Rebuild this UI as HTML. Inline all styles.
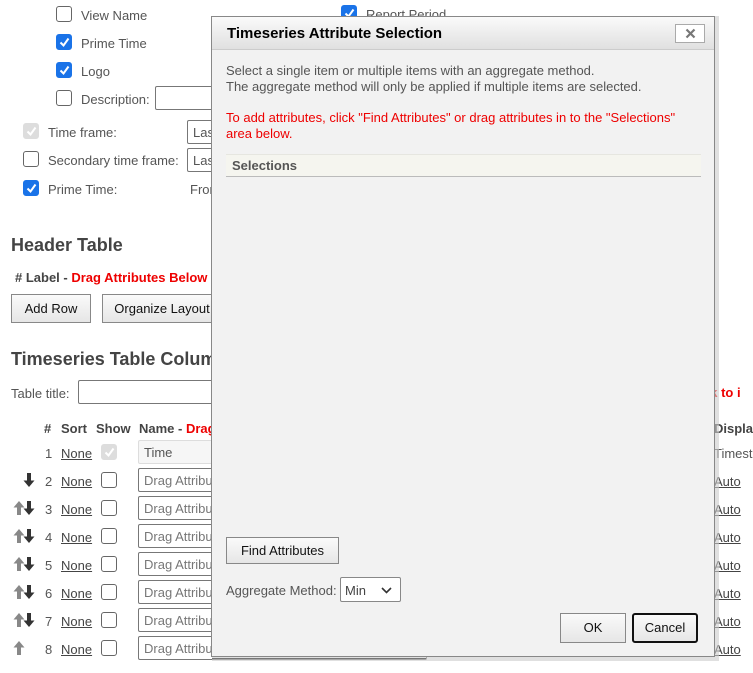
<!DOCTYPE html>
<html><head><meta charset="utf-8">
<style>
*{box-sizing:border-box;margin:0;padding:0}
body{width:753px;height:673px;overflow:hidden;background:#fff;font-family:"Liberation Sans",sans-serif;font-size:13px;color:#555;position:relative}
.a{position:absolute;white-space:nowrap}
.cb{position:absolute;width:16px;height:16px;border:1px solid #666;border-radius:3px;background:#fff}
.cb.on{background:#1a73e8;border-color:#1a73e8}
.cb.dis{background:#ddd;border-color:#ddd}
.cb svg{position:absolute;left:2px;top:2px}
.inp{position:absolute;border:1px solid #777;border-radius:2px;background:#fff;height:24px;padding:4px 5px;color:#777;white-space:nowrap;overflow:hidden}
.btn{position:absolute;border:1px solid #888;background:linear-gradient(#fafafa,#e6e6e6);color:#111;text-align:center;font-size:13px}
h2{position:absolute;font-size:18px;font-weight:bold;color:#444}
.red{color:#e00}
u{color:#444}
</style></head><body>

<div class="cb" style="left:56px;top:6px"></div><div class="a" style="left:81px;top:8px">View Name</div>
<div class="cb on" style="left:56px;top:34px"><svg width="11" height="11" viewBox="0 0 11 11"><path d="M1.5 5.5l3 3 5-7" stroke="#fff" stroke-width="2" fill="none"/></svg></div><div class="a" style="left:81px;top:36px">Prime Time</div>
<div class="cb on" style="left:56px;top:62px"><svg width="11" height="11" viewBox="0 0 11 11"><path d="M1.5 5.5l3 3 5-7" stroke="#fff" stroke-width="2" fill="none"/></svg></div><div class="a" style="left:81px;top:64px">Logo</div>
<div class="cb" style="left:56px;top:90px"></div><div class="a" style="left:81px;top:92px">Description:</div>
<div class="inp" style="left:155px;top:86px;width:70px"></div>
<div class="cb on" style="left:341px;top:5px;"><svg width="11" height="11" viewBox="0 0 11 11"><path d="M1.5 5.5l3 3 5-7" stroke="#fff" stroke-width="2" fill="none"/></svg></div><div class="a" style="left:366px;top:7px">Report Period</div>

<div class="cb dis" style="left:23px;top:123px"><svg width="11" height="11" viewBox="0 0 11 11"><path d="M1.5 5.5l3 3 5-7" stroke="#fff" stroke-width="2" fill="none"/></svg></div><div class="a" style="left:48px;top:125px">Time frame:</div>
<div class="inp" style="left:187px;top:120px;width:40px;color:#555">Last</div>
<div class="cb" style="left:23px;top:151px"></div><div class="a" style="left:48px;top:153px">Secondary time frame:</div>
<div class="inp" style="left:187px;top:148px;width:40px;color:#555">Last</div>
<div class="cb on" style="left:23px;top:180px"><svg width="11" height="11" viewBox="0 0 11 11"><path d="M1.5 5.5l3 3 5-7" stroke="#fff" stroke-width="2" fill="none"/></svg></div><div class="a" style="left:48px;top:182px">Prime Time:</div>
<div class="a" style="left:190px;top:182px">From</div>

<h2 style="left:11px;top:235px">Header Table</h2>
<div class="a" style="left:15px;top:270px;font-weight:bold;color:#444"># Label - <span class="red">Drag Attributes Below</span></div>
<div class="btn" style="left:11px;top:294px;width:80px;height:29px;line-height:27px">Add Row</div>
<div class="btn" style="left:102px;top:294px;width:120px;height:29px;line-height:27px">Organize Layout</div>

<h2 style="left:11px;top:349px">Timeseries Table Columns</h2>
<div class="a" style="left:11px;top:386px">Table title:</div>
<div class="inp" style="left:78px;top:380px;width:150px"></div>
<div class="a red" style="left:703px;top:385px;font-weight:bold">ck to i</div>

<div class="a" style="left:44px;top:421px;font-weight:bold;color:#444">#</div>
<div class="a" style="left:61px;top:421px;font-weight:bold;color:#444">Sort</div>
<div class="a" style="left:96px;top:421px;font-weight:bold;color:#444">Show</div>
<div class="a" style="left:139px;top:421px;font-weight:bold;color:#444">Name - <span class="red">Drag</span></div>
<div class="a" style="left:714px;top:421px;font-weight:bold;color:#444">Display</div>

<div class="a" style="left:45px;top:446px">1</div><div class="a" style="left:61px;top:446px"><u>None</u></div>
<div class="cb dis" style="left:101px;top:444px"><svg width="11" height="11" viewBox="0 0 11 11"><path d="M1.5 5.5l3 3 5-7" stroke="#fff" stroke-width="2" fill="none"/></svg></div>
<div class="inp" style="left:138px;top:440px;width:90px;background:#f6f6f6;border-color:#ddd;color:#555">Time</div>
<div class="a" style="left:714px;top:446px">Timestamp</div>

<div id="rows"></div>
<script>
var h='';
for(var i=2;i<=8;i++){var y=452+(i-1)*28;
var up=i>2,dn=i<8;
h+='<svg class="a" style="left:13px;top:'+(y-8)+'px" width="22" height="16" viewBox="0 0 22 16">'+
(up?'<path d="M6 1L0.5 7.5h3.5V15h4V7.5h3.5z" fill="#888"/>':'')+
(dn?'<path d="M16 15l5.5-6.5H18V1h-4v7.5h-3.5z" fill="#333"/>':'')+'</svg>';
h+='<div class="a" style="left:45px;top:'+(y-6)+'px">'+i+'</div><div class="a" style="left:61px;top:'+(y-6)+'px"><u>None</u></div>';
h+='<div class="cb" style="left:101px;top:'+(y-8)+'px"></div>';
h+='<div class="inp" style="left:138px;top:'+(y-12)+'px;width:'+(i==8?289:90)+'px">Drag Attributes</div>';
h+='<div class="a" style="left:714px;top:'+(y-6)+'px"><u>Auto</u></div>';
}
document.getElementById('rows').innerHTML=h;
</script>

<div style="position:absolute;left:212px;top:16px;width:507px;height:645px;background:#ccc;opacity:.6"></div>
<div style="position:absolute;left:211px;top:16px;width:504px;height:641px;background:#f2f2f2;border:1px solid #888">
 <div style="height:33px;background:linear-gradient(#fafafa,#e0e0e0);border-bottom:1px solid #ccc;position:relative">
  <div class="a" style="left:15px;top:8px;font-size:15px;font-weight:bold;color:#000">Timeseries Attribute Selection</div>
  <div style="position:absolute;left:463px;top:7px;width:30px;height:19px;border:1px solid #aaa;background:#fff">
   <svg style="position:absolute;left:9px;top:3px" width="11" height="11" viewBox="0 0 11 11"><path d="M1.5 1.5l8 8M9.5 1.5l-8 8" stroke="#777" stroke-width="2.2"/></svg>
  </div>
 </div>
 <div class="a" style="left:14px;top:46px;line-height:16px;color:#555">Select a single item or multiple items with an aggregate method.<br>The aggregate method will only be applied if multiple items are selected.</div>
 <div class="a red" style="left:14px;top:93px;line-height:16px">To add attributes, click "Find Attributes" or drag attributes in to the "Selections"<br>area below.</div>
 <div style="position:absolute;left:14px;top:137px;width:475px;height:23px;background:#f5f5ef;border-bottom:1px solid #bbb;border-top:1px solid #e6e6e0;padding:3px 6px;font-weight:bold;color:#555;font-size:13px">Selections</div>
 <div class="btn" style="left:14px;top:520px;width:113px;height:27px;line-height:25px">Find Attributes</div>
 <div class="a" style="left:14px;top:566px">Aggregate Method:</div>
 <div style="position:absolute;left:128px;top:560px;width:61px;height:25px;border:1px solid #888;border-radius:2px;background:#fff;padding:5px 4px;color:#444">Min
  <svg style="position:absolute;right:8px;top:9px" width="11" height="7" viewBox="0 0 11 7"><path d="M1 1l4.5 4.5L10 1" stroke="#333" stroke-width="1.6" fill="none"/></svg></div>
 <div class="btn" style="left:348px;top:596px;width:66px;height:30px;line-height:28px">OK</div>
 <div class="btn" style="left:420px;top:596px;width:66px;height:30px;line-height:26px;border:2px solid #111;border-radius:3px">Cancel</div>
</div>
<div style="position:absolute;left:212px;top:657px;width:214px;height:2px;border-bottom:1px solid #777"></div>
</body></html>
